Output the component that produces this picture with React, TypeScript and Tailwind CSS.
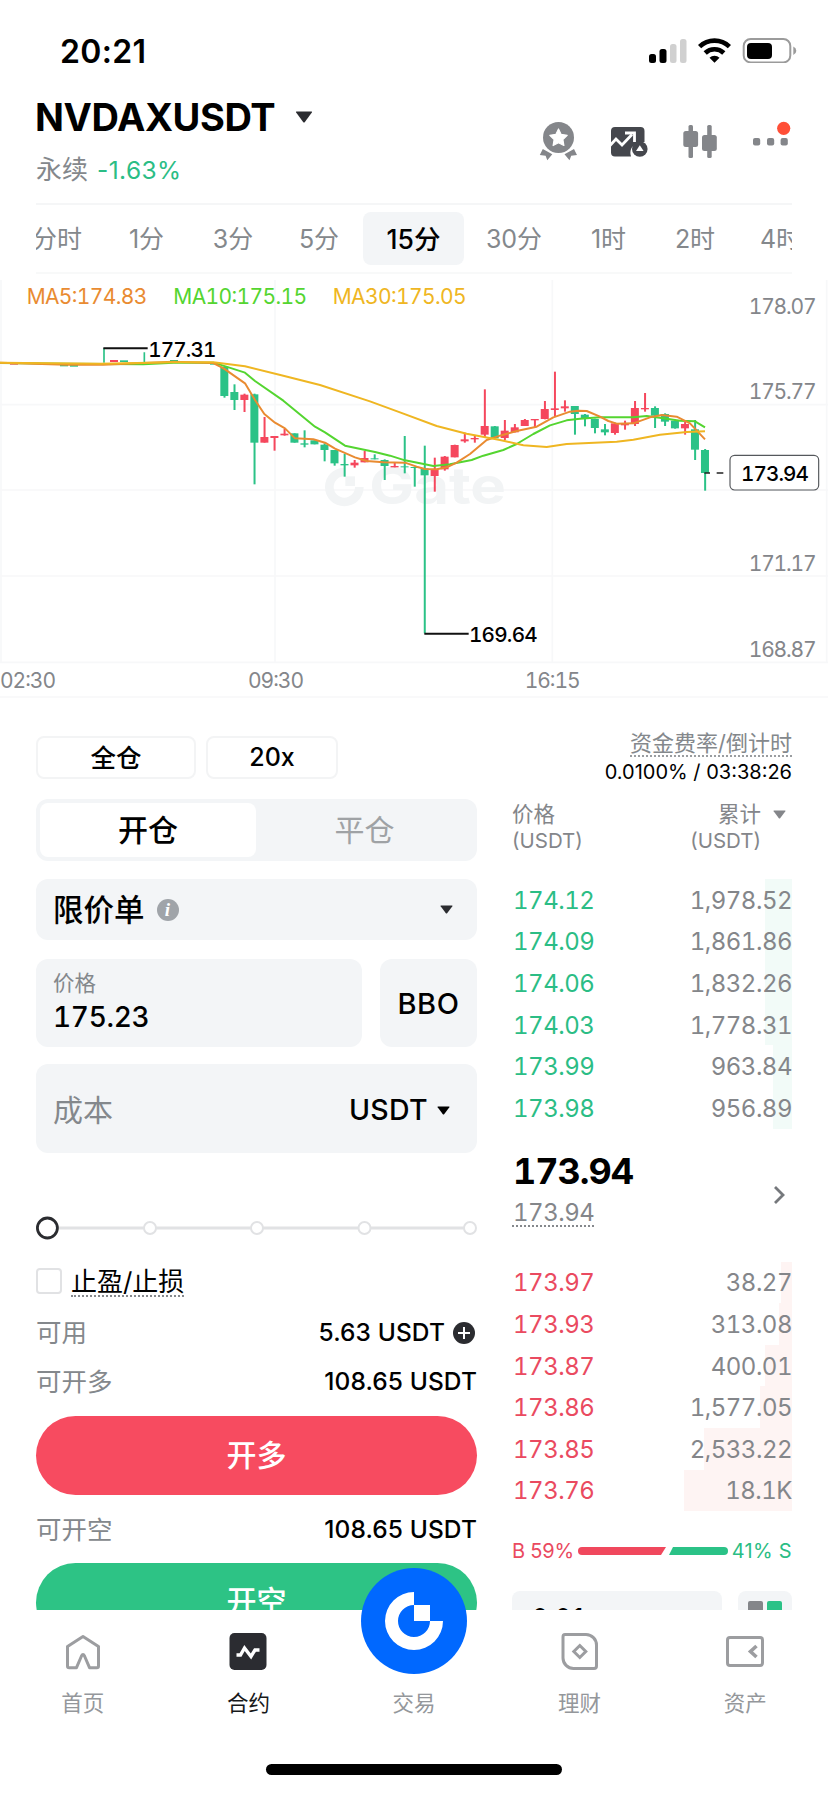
import React from "react";

const periods = [
  { label: "分时", width: "w-[90px]" },
  { label: "1分", width: "w-[89px]" },
  { label: "3分", width: "w-[84px]" },
  { label: "5分", width: "w-[88px]" },
  { label: "15分", width: "w-[101px]" },
  { label: "30分", width: "w-[100px]" },
  { label: "1时", width: "w-[89px]" },
  { label: "2时", width: "w-[84px]" },
  { label: "4时", width: "w-[87px]" },
];

const sells = [
  { price: "174.12", total: "1,978.52", depth: 27 },
  { price: "174.09", total: "1,861.86", depth: 27 },
  { price: "174.06", total: "1,832.26", depth: 27 },
  { price: "174.03", total: "1,778.31", depth: 27 },
  { price: "173.99", total: "963.84", depth: 19 },
  { price: "173.98", total: "956.89", depth: 19 },
];

const buys = [
  { price: "173.97", total: "38.27", depth: 11 },
  { price: "173.93", total: "313.08", depth: 13 },
  { price: "173.87", total: "400.01", depth: 27 },
  { price: "173.86", total: "1,577.05", depth: 32 },
  { price: "173.85", total: "2,533.22", depth: 88 },
  { price: "173.76", total: "18.1K", depth: 108 },
];

const GREEN = "#2bc287";
const RED = "#f5475d";

// [up, high, low, body top, body bottom] in chart units, one every 30 units
const candles: [number, number, number, number, number][] = [
  [0, 290, 383, 290, 378],
  [0, 343, 420, 366, 390],
  [1, 371, 426, 374, 390],
  [0, 371, 643, 373, 518],
  [1, 441, 518, 501, 518],
  [1, 498, 542, 498, 504],
  [1, 477, 497, 491, 496],
  [0, 490, 518, 490, 518],
  [0, 481, 532, 520, 524],
  [0, 511, 523, 511, 523],
  [0, 520, 574, 524, 540],
  [0, 540, 587, 540, 580],
  [0, 552, 620, 582, 586],
  [1, 570, 593, 578, 586],
  [1, 543, 577, 564, 577],
  [0, 553, 568, 565, 568],
  [0, 568, 630, 570, 588],
  [1, 579, 592, 588, 592],
  [0, 498, 610, 589, 592],
  [0, 590, 650, 591, 594],
  [0, 527, 1090, 595, 616],
  [1, 563, 665, 598, 618],
  [1, 558, 602, 560, 598],
  [1, 524, 562, 525, 562],
  [1, 488, 518, 508, 514],
  [1, 496, 518, 504, 508],
  [1, 358, 502, 468, 494],
  [0, 468, 505, 469, 505],
  [1, 450, 511, 482, 504],
  [1, 462, 487, 472, 487],
  [1, 447, 468, 450, 468],
  [1, 447, 472, 447, 451],
  [1, 393, 448, 417, 447],
  [1, 305, 438, 415, 420],
  [1, 391, 425, 409, 415],
  [0, 408, 494, 408, 432],
  [0, 432, 469, 434, 447],
  [0, 446, 490, 447, 474],
  [0, 462, 496, 478, 487],
  [1, 458, 494, 460, 489],
  [1, 452, 479, 460, 466],
  [1, 393, 468, 414, 462],
  [1, 369, 425, 414, 418],
  [0, 409, 474, 414, 437],
  [0, 430, 468, 432, 455],
  [0, 452, 476, 452, 475],
  [1, 456, 494, 462, 475],
  [0, 450, 570, 478, 539],
  [0, 537, 662, 540, 609],
];

const flat: [number, number, number, number][] = [
  [1, 42, 280, 284],
  [0, 192, 284, 289],
  [0, 222, 285, 290],
  [1, 342, 270, 276],
  [0, 372, 271, 276],
  [0, 522, 270, 275],
  [0, 642, 276, 284],
];

const ma5 =
  "0,278 200,284 310,284 430,279 520,275 640,279 672,296 735,340 765,390 793,432 825,458 855,475 885,505 940,508 975,518 1005,536 1065,562 1100,573 1150,577 1215,578 1250,590 1275,597 1310,598 1340,592 1370,578 1410,552 1460,510 1500,497 1550,483 1610,470 1660,442 1710,425 1735,422 1760,423 1800,440 1825,453 1850,461 1900,460 1950,442 1985,435 2030,440 2070,460 2115,508";
const ma10 =
  "0,279 200,281 430,283 520,278 640,278 660,284 735,308 765,333 850,392 945,470 975,487 1035,527 1125,546 1170,557 1215,571 1260,580 1300,588 1350,583 1415,570 1450,557 1510,540 1550,522 1600,492 1650,466 1700,451 1740,446 1800,442 1900,442 1940,438 1990,445 2040,452 2085,454 2115,472";
const ma30 =
  "0,278 300,281 520,277 640,277 735,289 850,317 960,345 1110,394 1200,427 1310,468 1400,491 1500,510 1570,526 1640,531 1700,522 1850,515 1900,509 1980,494 2060,486 2115,484";

const Caret = ({ className }: { className?: string }) => (
  <svg viewBox="0 0 16 11" className={className}>
    <path d="M1.2 0.5h13.6q1 0 .4.9L8.8 10q-.8 1-1.6 0L.8 1.4Q.2.5 1.2.5z" fill="currentColor" />
  </svg>
);

const StatusBar = () => (
  <div className="flex h-[91px] items-end justify-between pl-[60px] pr-[30px] pb-[21px]">
    <span className="text-[32px] leading-[36px] font-semibold tracking-[0.3px]">20:21</span>
    <svg className="mb-[7px] h-[26px] w-[150px]" viewBox="648 37 150 26">
      <rect x="649" y="54" width="7" height="9" rx="2.5" />
      <rect x="659.5" y="49" width="7" height="14" rx="2.5" />
      <rect x="670" y="44" width="6.5" height="19" rx="2.5" fill="#d0d0d0" />
      <rect x="680" y="39" width="6.5" height="24" rx="2.5" fill="#d0d0d0" />
      <g fill="none" stroke="#000" strokeWidth="4.6">
        <path d="M699.6 46.6a21.5 21.5 0 0 1 29.8 0" />
        <path d="M705.2 53a13.4 13.4 0 0 1 18.6 0" />
      </g>
      <path d="M714.5 62.8l-5-5.1a7.4 7.4 0 0 1 10 0z" />
      <rect x="743.7" y="39" width="46.6" height="23.4" rx="7" fill="none" stroke="#9b9b9b" strokeWidth="2" />
      <rect x="747" y="43" width="25" height="16" rx="4" />
      <path d="M793.3 46.5q3 1.5 3 4.3t-3 4.3z" fill="#9b9b9b" />
    </svg>
  </div>
);

const Header = () => (
  <div className="mx-9 flex h-[114px] border-b-2 border-[#f5f6f7]">
    <div className="flex-1">
      <div className="-ml-px flex h-[51px] items-center">
        <h1 className="text-[38px] leading-none font-bold tracking-[-0.4px]">NVDAXUSDT</h1>
        <Caret className="ml-[20px] h-[12px] w-[18px] text-[#2b2c30]" />
      </div>
      <div className="flex h-[56px] items-center gap-[9px]">
        <span className="text-[26px] leading-none text-[#84888c]">永续</span>
        <span className="text-[24.500px] leading-none tracking-[0.400px] text-[#2bbd85]">-1.63%</span>
      </div>
    </div>
    <svg className="mt-[27px] h-[50px] w-[256px]" viewBox="536 118 256 50">
      <circle cx="558.5" cy="137.500" r="15.500" fill="#84868a" />
      <path
        d="M558.500 129l2.700 5.400 6 .9-4.300 4.200 1 6-5.400-2.800-5.400 2.800 1-6-4.300-4.200 6-.9z"
        fill="#fff"
        stroke="#fff"
        strokeWidth="1.200"
        strokeLinejoin="round"
      />
      <path d="M542.800 149l9.500 5.200-5 6-1.700-4.500-5.800-.8z" fill="#84868a" />
      <path d="M574 149l-9.500 5.200 5 6 1.700-4.500 5.800-.8z" fill="#84868a" />
      <path d="M615 127h25.500q4 0 4 4v11q-9-1-13 6-2 4-.5 8.500h-16q-4 0-4-4v-21.500q0-4 4-4z" fill="#45474d" />
      <path d="M610 145.500l6-6.500 6 6 10-10.500" fill="none" stroke="#fff" strokeWidth="2.800" />
      <path d="M625 133h9.500v9" fill="none" stroke="#fff" strokeWidth="2.800" />
      <circle cx="639.800" cy="149" r="7.800" fill="#45474d" />
      <path d="M639.800 145.200l3.800 5.800h-7.600z" fill="#fff" />
      <g fill="#84868a">
        <rect x="688.500" y="125" width="4.500" height="33" rx="1.500" />
        <rect x="683.300" y="131" width="14.800" height="16" rx="2.500" />
        <rect x="707.200" y="125" width="4.500" height="33" rx="1.500" />
        <rect x="702" y="135" width="14.800" height="16" rx="2.500" />
        <rect x="753" y="138" width="7.200" height="7.500" rx="2" />
        <rect x="767" y="138" width="7.200" height="7.500" rx="2" />
        <rect x="780.600" y="138" width="7.200" height="7.500" rx="2" />
      </g>
      <circle cx="783.700" cy="128.300" r="6.600" fill="#ff4f37" />
    </svg>
  </div>
);

const Periods = () => (
  <div className="mx-9 flex h-[69px] items-center overflow-hidden border-b-2 border-[#f8f9f9]">
    <div className="-ml-[24px] flex shrink-0 items-center text-center text-[25px]">
      {periods.map(({ label, width }) => (
        <div
          key={label}
          className={
            label === "15分"
              ? `h-[53px] rounded-lg bg-[#f3f5f7] text-[26.500px] leading-[54px] font-medium text-black ${width}`
              : `leading-[54px] text-[#84888c] ${width}`
          }
        >
          {label}
        </div>
      ))}
    </div>
  </div>
);

const Chart = () => (
  <svg viewBox="0 12 2484 1272" className="block h-[424px] w-[828px] shrink-0 tabular-nums">
    <g stroke="#f7f8f9" strokeWidth="5">
      <path d="M3 30V1177M825 30V1177M1657 30V1177M2480 30V1177" />
      <path d="M0 404H2484M0 660H2484M0 918H2484M0 1177H2484M0 1281H2484" />
    </g>
    <g fill="#f2f4f5">
      <path d="M1033 593a58 58 0 1 0 58 58h-26a32 32 0 1 1-32-32z" />
      <path d="M1036 619h29v29h-29z" />
      <text x="1108" y="703" fontSize="152" fontWeight="700" textLength="410" lengthAdjust="spacingAndGlyphs">
        Gate
      </text>
    </g>
    <g fontSize="63">
      <text x="80" y="103" fill="#e98b31" textLength="362">MA5:174.83</text>
      <text x="520" y="103" fill="#54d530" textLength="401">MA10:175.15</text>
      <text x="998" y="103" fill="#efb622" textLength="402">MA30:175.05</text>
    </g>
    <g fontSize="63" fill="#84868a">
      <text x="2246" y="132" textLength="204">178.07</text>
      <text x="2246" y="388" textLength="204">175.77</text>
      <text x="2246" y="903" textLength="204">171.17</text>
      <text x="2246" y="1161" textLength="204">168.87</text>
      <text x="0" y="1255" textLength="168">02:30</text>
      <text x="744" y="1255" textLength="168">09:30</text>
      <text x="1574" y="1255" textLength="168">16:15</text>
    </g>
    <path d="M312 235V278M433 247V277" stroke={GREEN} strokeWidth="5" />
    {flat.map(([up, x, top, bottom]) => (
      <rect key={x} x={x - 12} y={top} width="24" height={bottom - top} fill={up ? RED : GREEN} />
    ))}
    {candles.map(([up, high, low, top, bottom], i) => {
      const x = 673 + i * 30.04;
      return (
        <g key={i} fill={up ? RED : GREEN}>
          <rect x={x - 2.5} y={high} width="6" height={low - high} />
          <rect x={x - 12} y={top} width="24" height={bottom - top} />
        </g>
      );
    })}
    <g fill="none" strokeWidth="6" strokeLinejoin="round">
      <polyline points={ma10} stroke="#54d530" />
      <polyline points={ma5} stroke="#e98b31" />
      <polyline points={ma30} stroke="#efb622" />
    </g>
    <path d="M310 235H443M1273 1091H1406" stroke="#111" strokeWidth="6" />
    <path d="M2113 609H2130M2150 609H2170" stroke="#222" strokeWidth="5" />
    <rect x="2190" y="556" width="266" height="104" rx="14" fill="#fff" stroke="#55585c" strokeWidth="3.5" />
    <g fontSize="62" fontWeight="500">
      <text x="445" y="260" textLength="204">177.31</text>
      <text x="1407" y="1116" textLength="206">169.64</text>
      <text x="2223" y="633" textLength="204">173.94</text>
    </g>
  </svg>
);

const Balance = ({ label, value, add }: { label: string; value: string; add?: boolean }) => (
  <div className="flex h-[49px] items-center justify-between">
    <span className="text-[25.500px] leading-none text-[#84888c]">{label}</span>
    <span className="flex items-center gap-[8px] text-[24.500px] leading-none font-medium tracking-[0.100px]">
      {value}
      {add && (
        <svg viewBox="0 0 22 22" className="mr-[2px] size-[22px]">
          <circle cx="11" cy="11" r="11" fill="#2b2c30" />
          <path d="M11 5v12M5 11h12" stroke="#fff" strokeWidth="2" />
        </svg>
      )}
    </span>
  </div>
);

const OrderForm = () => (
  <div className="w-[441px] pt-[38px]">
    <div className="flex h-[43px] gap-[10px] text-[25.500px]">
      <div className="flex w-[160px] items-center justify-center rounded-lg border-2 border-[#f3f4f5] pt-px font-medium">
        全仓
      </div>
      <div className="flex w-[132px] items-center justify-center rounded-lg border-2 border-[#f3f4f5] pt-px text-[25px] font-medium">
        20x
      </div>
    </div>

    <div className="mt-[20px] flex h-[62px] rounded-xl bg-[#f3f5f7] p-[4px] text-[30px]">
      <div className="flex w-[216px] items-center justify-center rounded-lg bg-white font-medium">开仓</div>
      <div className="flex flex-1 items-center justify-center text-[#9fa2a5]">平仓</div>
    </div>

    <div className="mt-[18px] flex h-[61px] items-center rounded-xl bg-[#f3f5f7] pr-[24px] pl-[17px]">
      <span className="text-[30.500px] font-medium">限价单</span>
      <span className="ml-[12px] flex size-[22px] items-center justify-center rounded-full bg-[#a0a4a9] font-['Liberation_Serif',serif] text-[19px] leading-none font-bold text-white italic">
        i
      </span>
      <Caret className="ml-auto h-[9px] w-[13px] text-[#2b2c30]" />
    </div>

    <div className="mt-[19px] flex h-[88px] gap-[18px]">
      <div className="flex w-[326px] flex-col rounded-xl bg-[#f3f5f7] pt-[12px] pl-[17px]">
        <span className="text-[21.500px] leading-[24px] text-[#84888c]">价格</span>
        <span className="mt-[5px] text-[28px] leading-[34px] font-medium tracking-[-0.300px] tabular-nums">175.23</span>
      </div>
      <div className="flex flex-1 items-center justify-center rounded-xl bg-[#f3f5f7] pt-px text-[29px] font-medium tracking-[0.600px]">
        BBO
      </div>
    </div>

    <div className="mt-[17px] flex h-[89px] items-center rounded-xl bg-[#f3f5f7] pt-[3px] pr-[27px] pl-[17px]">
      <span className="text-[30px] text-[#84888c]">成本</span>
      <span className="ml-auto text-[28.500px] font-medium tracking-[0.300px]">USDT</span>
      <Caret className="ml-[9px] h-[9px] w-[13px]" />
    </div>

    <svg viewBox="0 0 441 26" className="mt-[62px] h-[26px] w-[441px]">
      <path d="M12 13H434" stroke="#e1e2e4" strokeWidth="3" />
      <g fill="#fff" stroke="#e1e2e4" strokeWidth="2">
        <circle cx="114" cy="13" r="6" />
        <circle cx="221" cy="13" r="6" />
        <circle cx="328.500" cy="13" r="6" />
        <circle cx="434" cy="13" r="6" />
      </g>
      <circle cx="11.400" cy="13" r="10" fill="#fff" stroke="#2b2c30" strokeWidth="2.800" />
    </svg>

    <div className="mt-[17px] flex h-[46px] items-center">
      <span className="size-[26px] rounded-[4px] border-2 border-[#e1e2e4]" />
      <span className="mt-[2px] ml-[9px] border-b-2 border-dotted border-[#85888c] pt-px text-[26px] leading-[27px]">
        止盈/止损
      </span>
    </div>

    <div className="mt-[4px]">
      <Balance label="可用" value="5.63 USDT" add />
      <Balance label="可开多" value="108.65 USDT" />
    </div>
    <div className="mt-[10px] flex h-[79px] items-center justify-center rounded-full bg-[#f74b60] text-[30px] font-medium text-white">
      开多
    </div>
    <div className="mt-[10px]">
      <Balance label="可开空" value="108.65 USDT" />
    </div>
    <div className="mt-[9px] flex h-[79px] items-center justify-center rounded-full bg-[#2dc385] pb-[2px] text-[30px] font-medium text-white">
      开空
    </div>
  </div>
);

interface IRow {
  price: string;
  total: string;
  depth: number;
}

const BookRow = ({ row, color, bar }: { row: IRow; color: string; bar: string }) => (
  <div className="relative flex h-[41.600px] items-center justify-between pt-[2px] pl-px text-[24px] tracking-[-0.500px] tabular-nums">
    <div className={`absolute top-0 right-0 h-full ${bar}`} style={{ width: row.depth }} />
    <span className={`relative ${color}`}>{row.price}</span>
    <span className="relative text-[#84868a]">{row.total}</span>
  </div>
);

const OrderBook = () => (
  <div className="w-[280px] pt-[33px]">
    <div className="flex flex-col items-end">
      <span className="border-b-2 border-dotted border-[#9a9da0] text-[22px] leading-[24px] text-[#84888c]">
        资金费率/倒计时
      </span>
      <span className="mt-[3px] text-[20px] leading-[24px]">0.0100% / 03:38:26</span>
    </div>

    <div className="mt-[16px] flex justify-between text-[20.500px] leading-[28px] text-[#84868a]">
      <div>
        <div className="text-[21.500px]">价格</div>
        <div className="-mt-px">(USDT)</div>
      </div>
      <div className="text-right">
        <div className="flex items-center justify-end text-[21.500px]">
          累计
          <Caret className="mr-[6px] ml-[12px] h-[9px] w-[13px]" />
        </div>
        <div className="-mt-px mr-[31px]">(USDT)</div>
      </div>
    </div>

    <div className="mt-[24px]">
      {sells.map((row) => (
        <BookRow key={row.price} row={row} color="text-[#2bbd85]" bar="bg-[#f2fbf8]" />
      ))}
    </div>

    <div className="flex h-[133px] items-start justify-between">
      <div className="flex flex-col items-start pt-[20px] tabular-nums">
        <span className="pl-px text-[36px] leading-[44px] font-bold tracking-[-1px]">173.94</span>
        <span className="mt-[7px] border-b-2 border-dotted border-[#85888c] pt-px pl-px text-[24px] leading-[24px] tracking-[-0.500px] text-[#84868a]">
          173.94
        </span>
      </div>
      <svg viewBox="0 0 12 20" className="mt-[56px] mr-[7px] h-[20px] w-[12px]">
        <path d="M2 2l8 8-8 8" fill="none" stroke="#75787c" strokeWidth="2.800" />
      </svg>
    </div>

    <div>
      {buys.map((row) => (
        <BookRow key={row.price} row={row} color="text-[#ea4a60]" bar="bg-[#fef4f3]" />
      ))}
    </div>

    <div className="mt-[27px] flex h-[26px] items-center justify-between text-[20px]">
      <span className="tracking-[-0.200px] text-[#ea4a60]">B 59%</span>
      <svg viewBox="0 0 150 8" className="h-[8px] w-[150px]">
        <path d="M4 0H88l-5 8H4a4 4 0 0 1 0-8z" fill="#f0485d" />
        <path d="M95 0h51a4 4 0 0 1 0 8H91z" fill="#2bc287" />
      </svg>
      <span className="tracking-[0.300px] text-[#2bbd85]">41% S</span>
    </div>

    <div className="mt-[27px] flex justify-between">
      <div className="h-[60px] w-[210px] rounded-lg bg-[#f3f5f7] pt-[9px] pl-[20px] text-[25px] font-medium tabular-nums">
        0.01
      </div>
      <div className="flex h-[60px] w-[54px] justify-center gap-[4px] rounded-lg bg-[#f3f5f7] pt-[10px]">
        <div className="h-[40px] w-[15px] rounded-t-[2px] bg-[#84868a]" />
        <div className="h-[18px] w-[15px] rounded-t-[2px] bg-[#2bc287]" />
      </div>
    </div>
  </div>
);

const NavItem = ({ label, active, children }: { label: string; active?: boolean; children?: React.ReactNode }) => (
  <div className="flex flex-1 flex-col items-center">
    <svg viewBox="0 0 44 44" className="size-[44px]" fill="none" stroke="#9c9da0" strokeWidth="3">
      {children}
    </svg>
    <span
      className={
        active
          ? "mt-[13px] text-[21.500px] leading-[32px] text-[#17181a]"
          : "mt-[13px] text-[21.500px] leading-[32px] text-[#94979b]"
      }
    >
      {label}
    </span>
  </div>
);

const BottomNav = () => (
  <div className="relative flex h-[183px] shrink-0 bg-white pt-[20px]">
    <NavItem label="首页">
      <path
        d="M22 6.500L6.500 16.500V36q0 1.700 1.700 1.700H15.500L20.500 26q1.500-3 3 0L28.500 37.700H35.800q1.700 0 1.700-1.700V16.500z"
        strokeLinejoin="round"
      />
    </NavItem>
    <NavItem label="合约" active>
      <rect x="3.500" y="3" width="37" height="37" rx="5" fill="#2b2c31" stroke="none" />
      <path d="M10.500 25h4l4-7 6.500 8.500 4-6.500h4.500" stroke="#fff" strokeWidth="3.400" />
    </NavItem>
    <NavItem label="交易" />
    <NavItem label="理财">
      <path
        d="M7 4.500H28a10.500 10.500 0 0 1 10.500 10.500V36q0 2.500-2.500 2.500H15.500A10.500 10.500 0 0 1 5 28V7q0-2.500 2-2.500z"
        strokeLinejoin="round"
      />
      <path d="M21.800 15.500l6 6-6 6-6-6z" />
    </NavItem>
    <NavItem label="资产">
      <rect x="4.500" y="7.500" width="35" height="28" rx="2.500" />
      <path d="M33.500 16l-6 5.500 6 5.500" strokeWidth="3.600" />
    </NavItem>

    <svg viewBox="0 0 106 106" className="absolute -top-[42px] left-[361px] size-[106px]">
      <circle cx="53" cy="53" r="53" fill="#0068ff" />
      <path d="M53 24a29 29 0 1 0 29 29H69a16 16 0 1 1-16-16z" fill="#fff" />
      <path d="M53 37h16v16H53z" fill="#fff" />
    </svg>
    <div className="absolute bottom-[18px] left-[266px] h-[11px] w-[296px] rounded-full bg-black" />
  </div>
);

const App = () => {
  return (
    <div className="flex h-[1793px] w-[828px] flex-col overflow-hidden bg-white font-['Inter','Noto_Sans_CJK_SC',sans-serif] text-black">
      <StatusBar />
      <Header />
      <Periods />
      <Chart />
      <div className="flex min-h-0 flex-1 items-start justify-between overflow-hidden px-9">
        <OrderForm />
        <OrderBook />
      </div>
      <BottomNav />
    </div>
  );
};

export default App;
